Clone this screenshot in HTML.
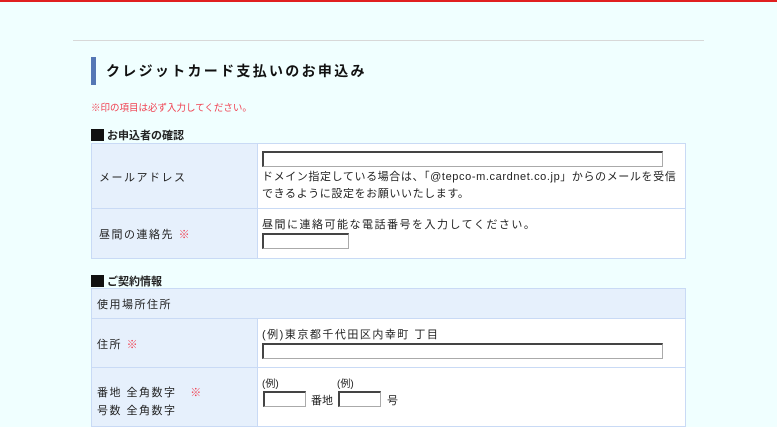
<!DOCTYPE html><html><head><meta charset="utf-8"><style>
body{margin:0;width:777px;height:423px;overflow:hidden;background:#f0ffff;font-family:"Liberation Sans","Noto Sans CJK JP",sans-serif;font-size:11px;color:#222;position:relative}
.a{position:absolute}
.lab{background:#e6f0fc;border:1px solid #c9daf5;box-sizing:border-box}
.val{background:#fff;border:1px solid #c9daf5;box-sizing:border-box}
.in{position:absolute;background:#fff;border:1px solid #aaa;border-top:2px solid #444;border-left:2px solid #444;box-sizing:border-box;height:16px}
.t{letter-spacing:1.5px;white-space:nowrap}
.h{font-weight:bold;font-size:11px;white-space:nowrap}
.h i{display:inline-block;width:13px;height:12px;background:#111;vertical-align:-2px;margin-right:3px}
.r{color:#f04050}
</style></head><body>
<div class="a" style="left:0;top:0;width:777px;height:2px;background:#e02020"></div>
<div class="a" style="left:73px;top:40px;width:631px;height:1px;background:#d8d8d8"></div>
<div class="a" style="left:91px;top:57px;width:5px;height:28px;background:#5577b5"></div>
<div class="a" style="left:106px;top:61px;font-size:14px;font-weight:bold;letter-spacing:2.3px;white-space:nowrap;color:#111">クレジットカード支払いのお申込み</div>
<div class="a r" style="left:91px;top:100px;font-size:9.5px;white-space:nowrap">※印の項目は必ず入力してください。</div>
<div class="a h" style="left:91px;top:127px"><i></i>お申込者の確認</div>
<div class="a lab" style="left:91px;top:143px;width:167px;height:66px"></div>
<div class="a val" style="left:257px;top:143px;width:429px;height:66px"></div>
<div class="a lab" style="left:91px;top:208px;width:167px;height:51px"></div>
<div class="a val" style="left:257px;top:208px;width:429px;height:51px"></div>
<div class="a t" style="left:99px;top:169px">メールアドレス</div>
<div class="in" style="left:262px;top:151px;width:401px"></div>
<div class="a t" style="left:262px;top:169px;line-height:17px;letter-spacing:0.6px">ドメイン指定している場合は、「@tepco-m.cardnet.co.jp」からのメールを受信<br>できるように設定をお願いいたします。</div>
<div class="a t" style="left:99px;top:226px">昼間の連絡先 <span class="r">※</span></div>
<div class="a t" style="left:262px;top:216px">昼間に連絡可能な電話番号を入力してください。</div>
<div class="in" style="left:262px;top:233px;width:87px"></div>
<div class="a h" style="left:91px;top:273px"><i></i>ご契約情報</div>
<div class="a lab" style="left:91px;top:288px;width:595px;height:31px"></div>
<div class="a t" style="left:97px;top:296px">使用場所住所</div>
<div class="a lab" style="left:91px;top:318px;width:167px;height:50px"></div>
<div class="a val" style="left:257px;top:318px;width:429px;height:50px"></div>
<div class="a t" style="left:97px;top:336px">住所 <span class="r">※</span></div>
<div class="a t" style="left:262px;top:326px">(例)東京都千代田区内幸町 丁目</div>
<div class="in" style="left:262px;top:343px;width:401px"></div>
<div class="a lab" style="left:91px;top:367px;width:167px;height:60px"></div>
<div class="a val" style="left:257px;top:367px;width:429px;height:60px"></div>
<div class="a t" style="left:97px;top:384px;line-height:18px">番地 全角数字 &nbsp;&nbsp;<span class="r">※</span><br>号数 全角数字</div>
<div class="a" style="left:262px;top:375px;font-size:10px">(例)</div>
<div class="a" style="left:337px;top:375px;font-size:10px">(例)</div>
<div class="in" style="left:263px;top:391px;width:43px"></div>
<div class="a" style="left:311px;top:392px">番地</div>
<div class="in" style="left:338px;top:391px;width:43px"></div>
<div class="a" style="left:387px;top:392px">号</div>
</body></html>
